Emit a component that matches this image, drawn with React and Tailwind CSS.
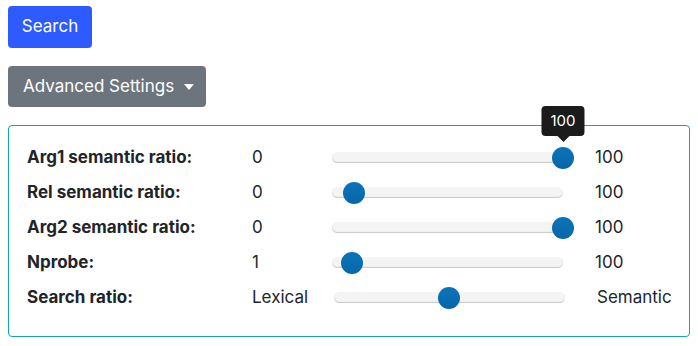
import React from 'react';

const rows = [
  { label: 'Arg1 semantic ratio:', min: '0', max: '100', pos: 231, tip: '100' },
  { label: 'Rel semantic ratio:', min: '0', max: '100', pos: 22 },
  { label: 'Arg2 semantic ratio:', min: '0', max: '100', pos: 231 },
  { label: 'Nprobe:', min: '1', max: '100', pos: 20 },
  { label: 'Search ratio:', min: 'Lexical', max: 'Semantic', pos: 115, shift: true },
];

const Slider = ({ pos, tip, shift }) => (
  <div className={`relative h-[35px] flex items-center ${shift ? 'ml-[2px]' : ''}`}>
    <div className="w-[231px] h-[11px] rounded-full bg-[#f4f4f4] shadow-[inset_0_-1px_1px_rgba(0,0,0,0.18)]" />
    <div
      className="absolute top-1/2 w-[22px] h-[22px] -translate-x-1/2 -translate-y-1/2 rounded-full bg-gradient-to-b from-[#0a74b9] to-[#0766aa]"
      style={{ left: pos }}
    />
    {tip && (
      <div
        className="absolute -top-[34px] -translate-x-1/2 flex flex-col items-center"
        style={{ left: pos }}
      >
        <div className="h-[30px] px-[9px] flex items-center rounded-[4px] bg-[#1b1b1b] text-white text-[15px]">
          {tip}
        </div>
        <div className="w-0 h-0 border-l-[6px] border-r-[6px] border-t-[6px] border-l-transparent border-r-transparent border-t-[#1b1b1b]" />
      </div>
    )}
  </div>
);

export default function App() {
  return (
    <div className="bg-white min-h-screen px-[8px] pt-[6px] text-[#212529] font-['Inter','Liberation_Sans',sans-serif]">
      <button className="h-[42px] w-[84px] flex items-center justify-center rounded-[4px] bg-[#2e5bff] text-white text-[17px]">
        Search
      </button>

      <div className="mt-[18px]">
        <button className="h-[41px] w-[198px] pl-[15px] flex items-center rounded-[4px] bg-[#6c757d] text-white text-[17px]">
          Advanced Settings
          <span className="ml-[10px] w-0 h-0 border-l-[5px] border-r-[5px] border-t-[6px] border-l-transparent border-r-transparent border-t-white" />
        </button>
      </div>

      <div className="mt-[18px] w-[682px] h-[212px] border border-[#17a2b8] rounded-[4px] pl-[18px] pt-[14px]">
        <div className="grid grid-cols-[225px_80px_263px_auto] items-center text-[17px]">
          {rows.map((r) => (
            <React.Fragment key={r.label}>
              <div className="font-bold">{r.label}</div>
              <div>{r.min}</div>
              <Slider pos={r.pos} tip={r.tip} shift={r.shift} />
              <div className={r.shift ? 'ml-[2px]' : ''}>{r.max}</div>
            </React.Fragment>
          ))}
        </div>
      </div>
    </div>
  );
}
